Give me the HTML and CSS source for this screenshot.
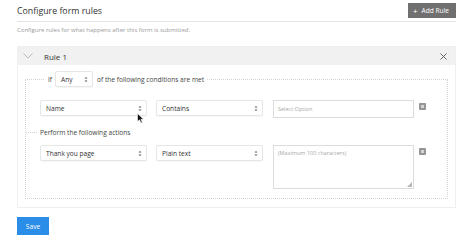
FILE: index.html
```html
<!DOCTYPE html>
<html lang="en">
<head>
    <meta charset="UTF-8">
    <title>Configure form rules</title>
    <link rel="stylesheet" href="styles.css">
</head>
<body>
    <div class="page">
        <div class="top-bar">
            <h1 class="title">Configure form rules</h1>
            <button class="add-rule"><span class="plus">+</span> Add Rule</button>
        </div>
        <p class="subtitle">Configure rules for what happens after this form is submitted.</p>

        <div class="rule-card">
            <div class="rule-header">
                <svg class="chevron" width="10" height="6" viewBox="0 0 10 6"><path d="M0.5 0.5 L5 5 L9.5 0.5" fill="none" stroke="#b5b5b5" stroke-width="0.9"/></svg>
                <span class="rule-name">Rule 1</span>
                <svg class="close" width="7" height="7" viewBox="0 0 7 7"><path d="M0.5 0.5 L6.5 6.5 M6.5 0.5 L0.5 6.5" stroke="#555" stroke-width="0.9"/></svg>
            </div>
            <div class="rule-body">
                <fieldset class="conditions">
                    <legend class="cond-legend">
                        <span>If</span>
                        <div class="select select-any">
                            <span>Any</span>
                            <svg width="4" height="7" viewBox="0 0 4 7"><path d="M0.5 2.5 L2 1 L3.5 2.5 Z M0.5 4.5 L2 6 L3.5 4.5 Z" fill="#555"/></svg>
                        </div>
                        <span>of the following conditions are met</span>
                    </legend>

                    <div class="rule-row">
                        <div class="select">
                            <span>Name</span>
                            <svg width="4" height="7" viewBox="0 0 4 7"><path d="M0.5 2.5 L2 1 L3.5 2.5 Z M0.5 4.5 L2 6 L3.5 4.5 Z" fill="#555"/></svg>
                        </div>
                        <div class="select">
                            <span>Contains</span>
                            <svg width="4" height="7" viewBox="0 0 4 7"><path d="M0.5 2.5 L2 1 L3.5 2.5 Z M0.5 4.5 L2 6 L3.5 4.5 Z" fill="#555"/></svg>
                        </div>
                        <div class="field"><span class="placeholder">Select Option</span></div>
                        <span class="remove"></span>
                    </div>

                    <div class="actions-label">
                        <span class="dash"></span>
                        <span>Perform the following actions</span>
                    </div>

                    <div class="rule-row rule-row-actions">
                        <div class="select">
                            <span>Thank you page</span>
                            <svg width="4" height="7" viewBox="0 0 4 7"><path d="M0.5 2.5 L2 1 L3.5 2.5 Z M0.5 4.5 L2 6 L3.5 4.5 Z" fill="#555"/></svg>
                        </div>
                        <div class="select">
                            <span>Plain text</span>
                            <svg width="4" height="7" viewBox="0 0 4 7"><path d="M0.5 2.5 L2 1 L3.5 2.5 Z M0.5 4.5 L2 6 L3.5 4.5 Z" fill="#555"/></svg>
                        </div>
                        <div class="field field-area"><span class="placeholder">(Maximum 100 characters)</span></div>
                        <span class="remove"></span>
                    </div>
                </fieldset>
            </div>
        </div>

        <button class="save">Save</button>

        <svg class="cursor" width="8" height="11" viewBox="0 0 8 11"><path d="M0.5 0.5 L0.5 8.5 L2.5 6.8 L4 10 L5.3 9.4 L3.9 6.3 L6.5 6.3 Z" fill="#111" stroke="#fff" stroke-width="0.6"/></svg>
    </div>
</body>
</html>
```

FILE: styles.css
```css
body {
    margin: 0;
    background-color: #ffffff;
    font-family: "Open Sans", "DejaVu Sans", sans-serif;
    color: #333333;
}

.page {
    position: relative;
    padding: 3px 18px 0 17px;
}

/* cabecera */
.top-bar {
    display: flex;
    justify-content: space-between;
    align-items: center;
    border-bottom: 1px solid #e4e4e4;
    padding-bottom: 3px;
}

.title {
    margin: 0;
    font-size: 8.8px;
    font-weight: 400;
    color: #333333;
}

.add-rule {
    width: 48px;
    height: 15px;
    padding: 0 0 0 5px;
    border: none;
    background-color: #707070;
    color: #ffffff;
    font-family: inherit;
    font-size: 6.6px;
    display: flex;
    align-items: center;
    gap: 4px;
}

.plus {
    font-size: 8px;
    line-height: 1;
}

.subtitle {
    margin: 4px 0 0 0;
    font-size: 6px;
    line-height: 8px;
    color: #9a9a9a;
}

/* tarjeta de la regla */
.rule-card {
    margin-top: 12px;
    border: 1px solid #efefef;
}

.rule-header {
    height: 18px;
    background-color: #f1f1f1;
    display: flex;
    align-items: center;
    padding: 0 8px 0 5px;
}

.chevron {
    margin-right: 11px;
}

.rule-name {
    font-size: 8px;
    flex: 1;
}

.rule-body {
    padding: 6px 7px 8px 7px;
}

.conditions {
    margin: 0;
    border: 1px dotted #d3d3d3;
    padding: 2px 7px 9px 14px;
}

.cond-legend {
    display: flex;
    align-items: center;
    gap: 3px;
    padding: 0 3px;
    margin-left: 5px;
    font-size: 6.6px;
    color: #444444;
}

.select {
    width: 107px;
    height: 16px;
    box-sizing: border-box;
    border: 1px solid #e6e6e6;
    border-radius: 2px;
    box-shadow: 0 1px 1px rgba(0, 0, 0, 0.04);
    display: flex;
    align-items: center;
    justify-content: space-between;
    padding: 0 4px 0 5px;
    font-size: 6.6px;
    color: #333333;
    background-color: #ffffff;
}

.select-any {
    width: 38px;
    margin-right: 1px;
}

.rule-row {
    display: flex;
    align-items: flex-start;
    margin-top: 11px;
}

.rule-row-actions {
    margin-top: 8px;
}

.rule-row .select + .select {
    margin-left: 9px;
}

.field {
    margin-left: 10px;
    width: 141px;
    height: 18px;
    box-sizing: border-box;
    border: 1px solid #dcdcdc;
    display: flex;
    align-items: center;
    padding-left: 4px;
}

.field-area {
    height: 44px;
    align-items: flex-start;
    padding-top: 3px;
    position: relative;
}

.field-area::after {
    content: "";
    position: absolute;
    right: 1px;
    bottom: 1px;
    border-style: solid;
    border-width: 0 0 5px 5px;
    border-color: transparent transparent #b8b8b8 transparent;
}

.placeholder {
    font-size: 5.5px;
    color: #a8a8a8;
}

.remove {
    margin: 3px 0 0 5px;
    width: 7px;
    height: 7px;
    box-sizing: border-box;
    border: 2px solid #959595;
    background-color: #d4d4d4;
    border-radius: 1px;
}

.actions-label {
    display: flex;
    align-items: center;
    gap: 3px;
    margin: 10px 0 0 -15px;
    font-size: 6.6px;
    color: #444444;
}

.dash {
    width: 12px;
    border-top: 1px dotted #d3d3d3;
}

.save {
    margin-top: 9px;
    width: 32px;
    height: 18px;
    border: none;
    background-color: #2a8de8;
    color: #ffffff;
    font-family: inherit;
    font-size: 6.6px;
    padding: 0;
}

.cursor {
    position: absolute;
    left: 137px;
    top: 113px;
}
```
